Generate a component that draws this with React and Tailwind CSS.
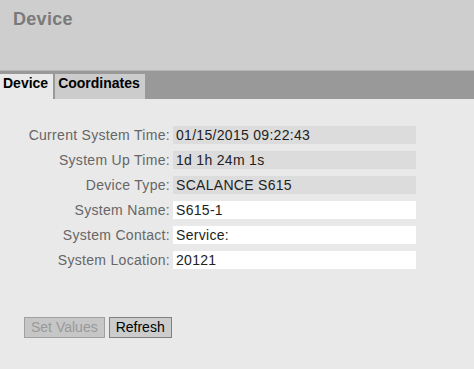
const fields = [
  { label: "Current System Time:", value: "01/15/2015 09:22:43", readOnly: true },
  { label: "System Up Time:", value: "1d 1h 24m 1s", readOnly: true },
  { label: "Device Type:", value: "SCALANCE S615", readOnly: true },
  { label: "System Name:", value: "S615-1" },
  { label: "System Contact:", value: "Service:" },
  { label: "System Location:", value: "20121" },
];

const App = () => {
  return (
    <div className="flex h-[369px] w-[474px] flex-col bg-[#e9e9e9] font-['Liberation_Sans',Arial,sans-serif]">
      {/* Header */}
      <div className="h-[70px] bg-[#cecece] pl-[13px] pt-[10px]">
        <h1 className="text-[18px] font-bold leading-[18px] tracking-[0.3px] text-[#7a7a7a]">Device</h1>
      </div>

      {/* Tabs */}
      <div className="flex h-[29px] items-end border-t border-[#b8b8b8] bg-[#999] pt-[2px]">
        <div className="h-[25px] bg-[#e9e9e9] pl-[3px] pr-[5px] text-[14px] font-bold leading-[19px] text-black">
          Device
        </div>
        <div className="ml-[2px] h-[25px] bg-[#cccccc] pl-[3px] pr-[5px] text-[14px] font-bold leading-[19px] text-black">
          Coordinates
        </div>
      </div>

      {/* Form */}
      <div className="flex-1 pt-[27px]">
        <div className="grid grid-cols-[170px_243px] gap-x-[3px] gap-y-[7px]">
          {fields.map((f) => (
            <div key={f.label} className="contents">
              <div className="text-right text-[14px] leading-[18px] tracking-[0.3px] text-[#666]">{f.label}</div>
              <div
                className={`h-[18px] pl-[3px] text-[14px] leading-[18px] tracking-[0.3px] text-[#222] ${
                  f.readOnly ? "bg-[#dcdcdc]" : "bg-white"
                }`}
              >
                {f.value}
              </div>
            </div>
          ))}
        </div>

        <div className="mt-[48px] flex gap-[4px] pl-[24px]">
          <button className="h-[21px] border border-[#a0a0a0] bg-[#c6c6c6] px-[6px] text-[14px] leading-[19px] text-[#999]">
            Set Values
          </button>
          <button className="h-[21px] border border-[#808080] bg-[#cccccc] px-[6px] text-[14px] leading-[19px] text-black">
            Refresh
          </button>
        </div>
      </div>
    </div>
  );
};

export default App;
